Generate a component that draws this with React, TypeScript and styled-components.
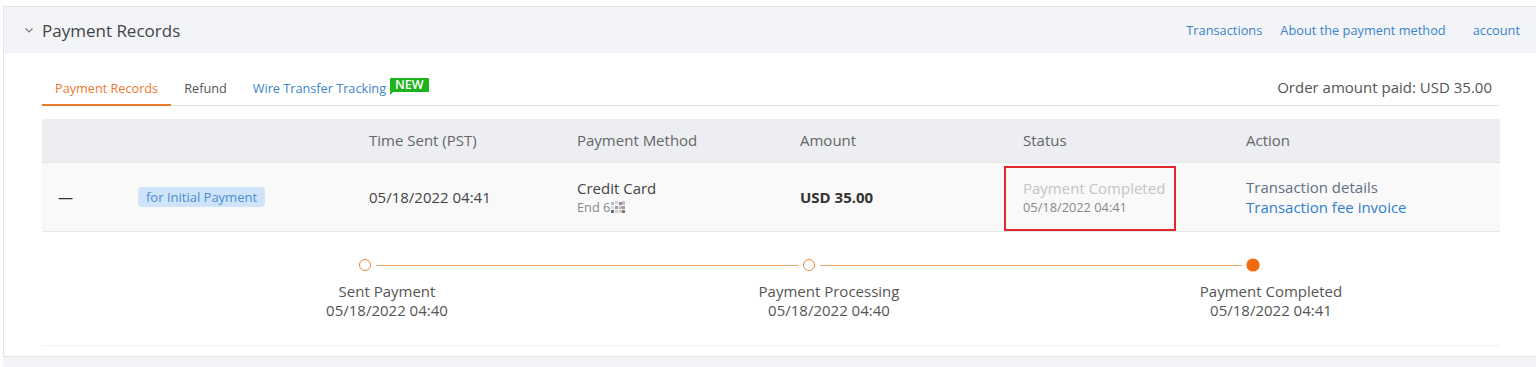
import styled, { createGlobalStyle } from 'styled-components'

const GlobalStyle = createGlobalStyle`
  html, body {
    margin: 0;
    padding: 0;
    background: #fff;
    font-family: "Open Sans", "Liberation Sans", Arial, sans-serif;
    color: #333;
  }
`

const Page = styled.div`
  padding-top: 6px;
  padding-left: 3px;
  height: 367px;
  box-sizing: border-box;
  overflow: hidden;
`

const Card = styled.div`
  border-top: 1px solid #e3e5e9;
  border-left: 1px solid #e3e5e9;
  border-bottom: 1px solid #e3e5e9;
  background: #fff;
`

const CardHeader = styled.div`
  height: 46px;
  background: #f2f4f7;
  display: flex;
  align-items: center;
  padding: 0 16px 0 20px;
`

const Title = styled.div`
  display: flex;
  align-items: center;
  gap: 8px;
  font-size: 17px;
  color: #444;
  flex: 1;
`

const HeaderLinks = styled.div`
  display: flex;
  align-items: center;
`

const HeaderLink = styled.a<{ $gap?: number }>`
  font-size: 12.8px;
  color: #3a84c9;
  text-decoration: none;
  margin-left: ${(p) => p.$gap ?? 0}px;
`

const Body = styled.div`
  padding: 19px 36px 10px 38px;
`

const TabBar = styled.div`
  display: flex;
  align-items: flex-end;
  border-bottom: 1px solid #e1e3e6;
  height: 33px;
`

const Tab = styled.div<{ $active?: boolean; $link?: boolean }>`
  font-size: 12.7px;
  padding: 0 13px 7px;
  color: ${(p) => (p.$active ? '#ec7a2c' : p.$link ? '#3a84c9' : '#555')};
  border-bottom: 2px solid ${(p) => (p.$active ? '#ec7a2c' : 'transparent')};
  margin-bottom: -1px;
  display: flex;
  align-items: center;
`

const NewBadge = styled.span`
  position: relative;
  top: -3px;
  margin-left: 4px;
  background: #1db31d;
  color: #fff;
  font-size: 12.5px;
  font-weight: 600;
  line-height: 14px;
  padding: 0 5px;
  border-radius: 1px;
  &::after {
    content: '';
    position: absolute;
    left: 0;
    bottom: -3px;
    border-left: 3px solid #1db31d;
    border-bottom: 3px solid transparent;
  }
`

const TabSpacer = styled.div`
  flex: 1;
`

const PaidText = styled.div`
  font-size: 15px;
  color: #555;
  padding-bottom: 8px;
  padding-right: 8px;
`

const Table = styled.div`
  margin-top: 13px;
`

const Row = styled.div<{ $head?: boolean }>`
  display: grid;
  grid-template-columns: 80px 231px 208px 223px 223px 223px 1fr;
  align-items: center;
  height: ${(p) => (p.$head ? 44 : 69)}px;
  background: ${(p) => (p.$head ? '#eceef1' : '#f9f9f9')};
  border-bottom: 1px solid ${(p) => (p.$head ? '#e2e4e8' : '#e6e8eb')};
  box-sizing: border-box;
`

const HeadCell = styled.div`
  padding-left: 16px;
  font-size: 15px;
  color: #666;
  padding-bottom: 2px;
`

const Cell = styled.div`
  padding-left: 16px;
  position: relative;
  height: 100%;
  display: flex;
  flex-direction: column;
  justify-content: center;
`

const Dash = styled.span`
  font-size: 15px;
  color: #333;
`

const Tag = styled.span`
  align-self: flex-start;
  background: #cfe4f8;
  color: #4a8fd6;
  font-size: 13px;
  line-height: 18px;
  border-radius: 4px;
  padding: 1px 8px 1px;
`

const Main = styled.div<{ $bold?: boolean; $muted?: boolean }>`
  font-size: 15px;
  line-height: 20px;
  font-weight: ${(p) => (p.$bold ? 700 : 400)};
  color: ${(p) => (p.$muted ? '#c4c4c4' : p.$bold ? '#333' : '#444')};
`

const Sub = styled.div`
  font-size: 12.8px;
  line-height: 18px;
  color: #888;
  display: flex;
  align-items: center;
`

const StatusFrame = styled.div`
  position: absolute;
  left: -3px;
  top: 3px;
  width: 172px;
  height: 65px;
  border: 2px solid #e1262c;
  box-sizing: border-box;
`

const ActionLink = styled.a<{ $primary?: boolean }>`
  font-size: 15px;
  line-height: 20px;
  text-decoration: none;
  color: ${(p) => (p.$primary ? '#2f7fcf' : '#5f6f84')};
`

const Steps = styled.div`
  padding-top: 26px;
  height: 114px;
  box-sizing: border-box;
  border-bottom: 1px solid #eef0f2;
`

const StepTrack = styled.div`
  display: flex;
  align-items: center;
  padding-left: 317px;
  height: 14px;
`

const Dot = styled.span<{ $done?: boolean }>`
  width: 12px;
  height: 12px;
  box-sizing: border-box;
  border-radius: 50%;
  flex: none;
  border: ${(p) => (p.$done ? 'none' : '1.5px solid #e8863a')};
  background: ${(p) => (p.$done ? '#f26a0f' : '#fff')};
  transform: ${(p) => (p.$done ? 'scale(1.1)' : 'none')};
`

const Line = styled.span`
  width: 422px;
  height: 1px;
  background: #e9a466;
  margin: 0 5px;
  flex: none;
`

const StepLabels = styled.div`
  display: grid;
  grid-template-columns: repeat(3, 442px);
  padding-left: 124px;
  margin-top: 10px;
`

const StepLabel = styled.div`
  text-align: center;
  font-size: 15px;
  line-height: 19px;
  color: #555;
`

const NextCard = styled.div`
  height: 20px;
  background: #f2f4f7;
`

const Chevron = () => (
  <svg width="10" height="8" viewBox="0 0 10 8">
    <path d="M1.5 2.5 L5 6 L8.5 2.5" fill="none" stroke="#777" strokeWidth="1.2" />
  </svg>
)

const Mosaic = () => (
  <svg width="14" height="12" viewBox="0 0 14 12" style={{ marginLeft: 1 }}>
    <rect x="0" y="1" width="3" height="3" fill="#b9b9c2" />
    <rect x="4" y="0" width="3" height="3" fill="#d6d0c8" />
    <rect x="8" y="1" width="3" height="3" fill="#8e8e98" />
    <rect x="11" y="0" width="3" height="4" fill="#c8c2cc" />
    <rect x="0" y="5" width="3" height="3" fill="#d8d8df" />
    <rect x="4" y="5" width="3" height="3" fill="#9c9ca8" />
    <rect x="8" y="5" width="3" height="3" fill="#c9b8a8" />
    <rect x="11" y="5" width="3" height="3" fill="#a09aa8" />
    <rect x="0" y="9" width="3" height="3" fill="#6e6e7a" />
    <rect x="4" y="9" width="3" height="3" fill="#cfcfd6" />
    <rect x="8" y="9" width="3" height="3" fill="#e0c9a8" />
    <rect x="11" y="9" width="3" height="3" fill="#7c7c88" />
  </svg>
)

const steps = [
  { label: 'Sent Payment', time: '05/18/2022 04:40' },
  { label: 'Payment Processing', time: '05/18/2022 04:40' },
  { label: 'Payment Completed', time: '05/18/2022 04:41' },
]

const App = () => {
  return (
    <>
      <GlobalStyle />
      <Page>
        <Card>
          <CardHeader>
            <Title>
              <Chevron />
              Payment Records
            </Title>
            <HeaderLinks>
              <HeaderLink href="#">Transactions</HeaderLink>
              <HeaderLink href="#" $gap={18}>About the payment method</HeaderLink>
              <HeaderLink href="#" $gap={27}>account</HeaderLink>
            </HeaderLinks>
          </CardHeader>
          <Body>
            <TabBar>
              <Tab $active>Payment Records</Tab>
              <Tab>Refund</Tab>
              <Tab $link>
                Wire Transfer Tracking
                <NewBadge>NEW</NewBadge>
              </Tab>
              <TabSpacer />
              <PaidText>Order amount paid: USD 35.00</PaidText>
            </TabBar>

            <Table>
              <Row $head>
                <HeadCell />
                <HeadCell />
                <HeadCell>Time Sent (PST)</HeadCell>
                <HeadCell>Payment Method</HeadCell>
                <HeadCell>Amount</HeadCell>
                <HeadCell>Status</HeadCell>
                <HeadCell>Action</HeadCell>
              </Row>
              <Row>
                <Cell>
                  <Dash>—</Dash>
                </Cell>
                <Cell>
                  <Tag>for Initial Payment</Tag>
                </Cell>
                <Cell>
                  <Main $bold={false}>05/18/2022 04:41</Main>
                </Cell>
                <Cell>
                  <Main>Credit Card</Main>
                  <Sub>
                    End 6<Mosaic />
                  </Sub>
                </Cell>
                <Cell>
                  <Main $bold>USD 35.00</Main>
                </Cell>
                <Cell>
                  <Main $muted>Payment Completed</Main>
                  <Sub>05/18/2022 04:41</Sub>
                  <StatusFrame />
                </Cell>
                <Cell>
                  <ActionLink href="#">Transaction details</ActionLink>
                  <ActionLink href="#" $primary>Transaction fee invoice</ActionLink>
                </Cell>
              </Row>
            </Table>

            <Steps>
              <StepTrack>
                <Dot />
                <Line />
                <Dot />
                <Line />
                <Dot $done />
              </StepTrack>
              <StepLabels>
                {steps.map((s) => (
                  <StepLabel key={s.label}>
                    {s.label}
                    <br />
                    {s.time}
                  </StepLabel>
                ))}
              </StepLabels>
            </Steps>
          </Body>
        </Card>
        <NextCard />
      </Page>
    </>
  )
}

export default App
